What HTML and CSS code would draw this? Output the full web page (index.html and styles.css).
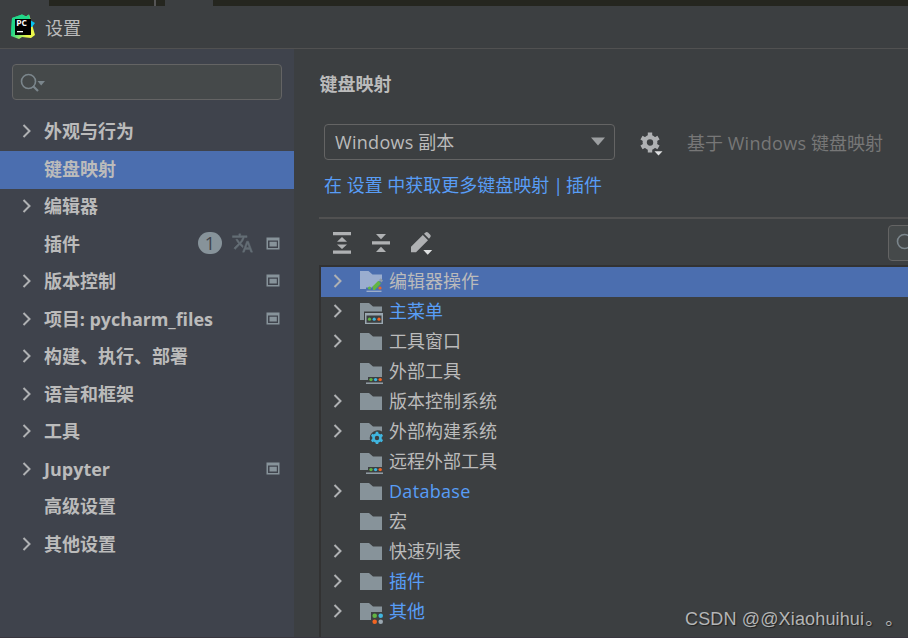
FILE: index.html
```
<!DOCTYPE html>
<html lang="zh-CN">
<head>
    <meta charset="UTF-8">
    <title>设置</title>
    <link rel="stylesheet" href="styles.css">
</head>
<body>
    <!-- Iconos compartidos -->
    <svg class="sprite" xmlns="http://www.w3.org/2000/svg">
        <symbol id="chevron" viewBox="0 0 10 14"><path d="M1.5 1 L7.5 7 L1.5 13" fill="none" stroke="currentColor" stroke-width="2"/></symbol>
        <symbol id="project" viewBox="0 0 14 13"><path fill="#87939a" fill-rule="evenodd" d="M0.5 0.5H13.5V12.5H0.5ZM2 3.5V11H12V3.5ZM3.5 4.7H10.8V9.6H3.5Z"/></symbol>
        <symbol id="search" viewBox="0 0 26 20"><circle cx="8.5" cy="8.5" r="7" fill="none" stroke="#7b868c" stroke-width="1.6"/><path d="M13 13L18 18" stroke="#7b868c" stroke-width="2.2"/><path d="M17.5 8H25L21.2 12.4Z" fill="#7b868c"/></symbol>
        <symbol id="folder" viewBox="0 0 24 24"><path d="M0 3H9L13 6.5H22V20H0Z" fill="#87939a"/></symbol>
        <symbol id="folder-edit" viewBox="0 0 24 24">
            <path d="M0 1H8.5L12.5 4.5H22V9L12 17.5H6V19H0Z" fill="#9aadcf"/>
            <path d="M12.8 20V16.2L18.3 10.7L21 13.4L14.8 20Z" fill="#62b543"/>
            <path d="M19 10L20.8 8.2L23 10.4L21.5 12.5Z" fill="#8f9ba5"/>
            <circle cx="9.5" cy="18" r="1.6" fill="#62b543"/><circle cx="20" cy="18" r="1.6" fill="#f26522"/>
            <path d="M6.5 21.3H21.5" stroke="#a3b2cc" stroke-width="1.3"/>
        </symbol>
        <symbol id="folder-menu" viewBox="0 0 24 24">
            <path d="M0 3H9L13 6.5H22V11.5H4V20H0Z" fill="#87939a"/>
            <path d="M5 13H23V24H5ZM6.5 15.5V22.7H21.5V15.5Z" fill="#9aa7b0" fill-rule="evenodd"/>
            <circle cx="9.5" cy="19.2" r="1.6" fill="#62b543"/><circle cx="14.2" cy="19.2" r="1.6" fill="#40b6e0"/><circle cx="19" cy="19.2" r="1.6" fill="#f26522"/>
        </symbol>
        <symbol id="folder-tool" viewBox="0 0 24 24">
            <path d="M0 3H9L13 6.5H22V17H8V20H0Z" fill="#87939a"/>
            <circle cx="11" cy="19.6" r="1.7" fill="#62b543"/><circle cx="15.6" cy="19.6" r="1.7" fill="#40b6e0"/><circle cx="20.2" cy="19.6" r="1.7" fill="#f26522"/>
            <path d="M6 23.2H23" stroke="#9aa7b0" stroke-width="1.4"/>
        </symbol>
        <symbol id="folder-gear" viewBox="0 0 24 24">
            <path d="M0 3H9L13 6.5H22V11.5A8 8 0 0 0 10 20H0Z" fill="#87939a"/>
            <circle cx="17" cy="18" r="3.5" fill="none" stroke="#40b6e0" stroke-width="2.6"/>
            <path d="M17 11.8V14M17 22V24.2M11.6 14.9L13.5 16M20.5 20L22.4 21.1M11.6 21.1L13.5 20M20.5 16L22.4 14.9" stroke="#40b6e0" stroke-width="2.6"/>
        </symbol>
        <symbol id="folder-other" viewBox="0 0 24 24">
            <path d="M0 3H9L13 6.5H22V12H11V20H0Z" fill="#87939a"/>
            <circle cx="14.7" cy="15.8" r="2.3" fill="#62b543"/><circle cx="20.7" cy="15.8" r="2.3" fill="#40b6e0"/>
            <circle cx="14.7" cy="21.7" r="2.3" fill="#f26522"/><circle cx="20.7" cy="21.7" r="2.3" fill="#9aa7b0"/>
        </symbol>
    </svg>

    <div class="window">
        <div class="backdrop"><span class="tab first"></span><span class="mark"></span><span class="tab second"></span></div>
        <div class="titlebar">
            <svg class="logo" width="26" height="26" viewBox="0 0 26 26">
                <defs><linearGradient id="pc" x1="0" y1="0.3" x2="1" y2="0.7"><stop offset="0.2" stop-color="#21d789"/><stop offset="0.75" stop-color="#e9f64a"/></linearGradient></defs>
                <path d="M2 4L12 0.5L16 2.5L19 0.5L20.5 5L25 21L21 24L12 23L9 25L1 22Z" fill="url(#pc)"/>
                <path d="M20 6L25 9L22 13L20 13Z" fill="#07c3f2"/>
                <path d="M2 4L12 0.5L16 2.5L19 0.5L20 5H5L4 14L1 20Z" fill="#21d789"/>
                <rect x="5" y="5" width="16" height="16" fill="#000"/>
                <text class="logo-text" x="6.2" y="12.4">PC</text>
                <rect x="7" y="17" width="6" height="1.3" fill="#fff"/>
            </svg>
            <span>设置</span>
        </div>

        <div class="content">
            <div class="sidebar">
                <div class="search"><svg width="26" height="20"><use href="#search"/></svg></div>
                <ul class="menu">
                    <li><svg class="arrow"><use href="#chevron"/></svg>外观与行为</li>
                    <li class="selected"><span class="arrow"></span>键盘映射</li>
                    <li><svg class="arrow"><use href="#chevron"/></svg>编辑器</li>
                    <li>
                        <span class="arrow"></span>插件
                        <span class="marks">
                            <span class="badge">1</span>
                            <svg width="23" height="22" viewBox="0 0 24 24"><path fill="#646d75" stroke="#646d75" stroke-width="0.5" d="M12.87 15.07l-2.54-2.51.03-.03c1.74-1.94 2.98-4.17 3.71-6.53H17V4h-7V2H8v2H1v2h11.17C11.5 7.92 10.44 9.75 9 11.35 8.07 10.32 7.3 9.19 6.69 8h-2c.73 1.63 1.73 3.17 2.98 4.56l-5.09 5.02L4 19l5-5 3.11 3.11.76-2.04zM18.5 10h-2L12 22h2l1.12-3h4.75L21 22h2l-4.5-12zm-2.62 7l1.62-4.33L19.12 17h-3.24z"/></svg>
                            <svg class="project"><use href="#project"/></svg>
                        </span>
                    </li>
                    <li><svg class="arrow"><use href="#chevron"/></svg>版本控制<span class="marks"><svg class="project"><use href="#project"/></svg></span></li>
                    <li><svg class="arrow"><use href="#chevron"/></svg><span class="name">项目: pycharm_files</span><span class="marks"><svg class="project"><use href="#project"/></svg></span></li>
                    <li><svg class="arrow"><use href="#chevron"/></svg>构建、执行、部署</li>
                    <li><svg class="arrow"><use href="#chevron"/></svg>语言和框架</li>
                    <li><svg class="arrow"><use href="#chevron"/></svg>工具</li>
                    <li><svg class="arrow"><use href="#chevron"/></svg>Jupyter<span class="marks"><svg class="project"><use href="#project"/></svg></span></li>
                    <li><span class="arrow"></span>高级设置</li>
                    <li><svg class="arrow"><use href="#chevron"/></svg>其他设置</li>
                </ul>
            </div>

            <div class="main">
                <h1>键盘映射</h1>
                <div class="keymap">
                    <div class="select"><span><span class="latin">Windows</span> 副本</span><svg width="14" height="9" viewBox="0 0 14 9"><path d="M0 0.5H14L7 8.5Z" fill="#9c9fa1"/></svg></div>
                    <svg class="gear" width="24" height="24" viewBox="0 0 24 24">
                        <circle cx="10" cy="10.5" r="5.3" fill="none" stroke="#afb1b3" stroke-width="4.2"/>
                        <path d="M10 0.6V4M10 17V20.4M1.5 5.6L4.5 7.3M15.5 13.7L18.5 15.4M1.5 15.4L4.5 13.7M15.5 7.3L18.5 5.6" stroke="#afb1b3" stroke-width="4.4"/>
                        <path d="M13 18H24L18.5 24.5Z" fill="#3c3f41"/>
                        <path d="M14.5 19.2H22.5L18.5 23.4Z" fill="#dfe1e2"/>
                    </svg>
                    <span class="based">基于 <span class="latin">Windows</span> 键盘映射</span>
                </div>
                <div class="links">在 设置 中获取更多键盘映射<span class="divider"> | </span>插件</div>
                <div class="toolbar">
                    <svg width="18" height="22" viewBox="0 0 18 22"><path fill="#afb1b3" d="M0 0H18V3.3H0ZM0 18.5H18V21.8H0ZM9 5L14 9.8H4ZM4 12.5H14L9 17Z"/></svg>
                    <svg width="18" height="22" viewBox="0 0 18 22"><path fill="#afb1b3" d="M0 9.3H18V12.6H0ZM4 2H14L9 7.2ZM9 14.8L14 20H4Z"/></svg>
                    <svg width="22" height="23" viewBox="0 0 22 23"><path fill="#afb1b3" d="M0 20.3V14.8L11.8 3L17 8.2L5 20.3ZM13 1.8L14.5 0.4Q15.8 -0.4 17 0.6L19.2 2.8Q20.2 4 19.2 5.3L18 6.8Z"/><path fill="#dfe1e2" d="M12.3 18H21.2L16.7 22.7Z"/></svg>
                    <div class="find"><svg width="26" height="20"><use href="#search"/></svg></div>
                </div>
                <ul class="tree">
                    <li class="selected"><svg class="arrow"><use href="#chevron"/></svg><svg class="folder"><use href="#folder-edit"/></svg>编辑器操作</li>
                    <li class="changed"><svg class="arrow"><use href="#chevron"/></svg><svg class="folder"><use href="#folder-menu"/></svg>主菜单</li>
                    <li><svg class="arrow"><use href="#chevron"/></svg><svg class="folder"><use href="#folder"/></svg>工具窗口</li>
                    <li><span class="arrow"></span><svg class="folder"><use href="#folder-tool"/></svg>外部工具</li>
                    <li><svg class="arrow"><use href="#chevron"/></svg><svg class="folder"><use href="#folder"/></svg>版本控制系统</li>
                    <li><svg class="arrow"><use href="#chevron"/></svg><svg class="folder"><use href="#folder-gear"/></svg>外部构建系统</li>
                    <li><span class="arrow"></span><svg class="folder"><use href="#folder-tool"/></svg>远程外部工具</li>
                    <li class="changed"><svg class="arrow"><use href="#chevron"/></svg><svg class="folder"><use href="#folder"/></svg><span class="latin">Database</span></li>
                    <li><span class="arrow"></span><svg class="folder"><use href="#folder"/></svg>宏</li>
                    <li><svg class="arrow"><use href="#chevron"/></svg><svg class="folder"><use href="#folder"/></svg>快速列表</li>
                    <li class="changed"><svg class="arrow"><use href="#chevron"/></svg><svg class="folder"><use href="#folder"/></svg>插件</li>
                    <li class="changed"><svg class="arrow"><use href="#chevron"/></svg><svg class="folder"><use href="#folder-other"/></svg>其他</li>
                </ul>
            </div>
        </div>
        <div class="watermark">CSDN @@Xiaohuihui<span class="stops">。。</span></div>
    </div>
</body>
</html>
```
FILE: styles.css
```
* {
    box-sizing: border-box;
}

body {
    margin: 0;
    background-color: #3c3f41;
    color: #bbbbbb;
    font-family: "Open Sans", "Noto Sans CJK SC", sans-serif;
    font-size: 18px;
    line-height: 24px;
    overflow: hidden;
}

ul {
    list-style: none;
    margin: 0;
    padding: 0;
}

svg {
    display: block;
    flex-shrink: 0;
}

.sprite {
    display: none;
}

.window {
    position: relative;
    display: flex;
    flex-direction: column;
    width: 908px;
    height: 638px;
    border-bottom: 1px solid #39363f;
    overflow: hidden;
}

.backdrop {
    display: flex;
    flex-shrink: 0;
    height: 6px;
    background-color: #25261f;
}

.tab {
    width: 48px;
    background-color: #3c3f41;
}

.tab.first {
    width: 49px;
}

.mark {
    width: 2px;
    margin: 0 9px 0 105px;
    background-color: #555555;
}

.titlebar {
    display: flex;
    flex-shrink: 0;
    align-items: center;
    gap: 9px;
    height: 43px;
    padding-left: 10px;
    border-bottom: 1px solid #515151;
}

.titlebar span {
    padding-top: 2px;
}

.logo-text {
    font: bold 8.5px "Open Sans", sans-serif;
    fill: #ffffff;
}

.content {
    display: flex;
    flex: 1;
    min-height: 0;
}

.sidebar {
    width: 294px;
    flex-shrink: 0;
    padding-top: 15px;
    background-color: #3f434c;
}

.search {
    display: flex;
    align-items: center;
    height: 36px;
    margin: 0 12px 13.5px;
    padding: 1px 0 0 7px;
    border: 1px solid #646464;
    border-radius: 4px;
    background-color: #45494a;
}

.menu li {
    display: flex;
    align-items: center;
    height: 37.5px;
    padding: 0 14px 2px 22px;
    font-weight: bold;
}

.menu .selected,
.tree .selected {
    background-color: #4b6eaf;
}

.arrow {
    width: 10px;
    height: 14px;
    flex-shrink: 0;
    color: #afb1b3;
}

.menu .arrow {
    margin-right: 12px;
}

.name {
    letter-spacing: -0.08px;
}

.marks {
    display: flex;
    align-items: center;
    gap: 12px;
    margin-left: auto;
    margin-top: -1px;
}

.project {
    width: 14px;
    height: 13px;
}

.badge {
    width: 24px;
    height: 22px;
    margin-right: -3px;
    border-radius: 11px;
    background-color: #87939a;
    color: #3f434c;
    font-weight: normal;
    line-height: 23px;
    text-align: center;
}

.main {
    flex: 1;
    min-width: 0;
    padding: 23px 0 0 25px;
}

h1 {
    margin: 0;
    padding-left: 0.5px;
    font-size: 18px;
    line-height: 24px;
}

.latin {
    letter-spacing: 0.3px;
}

.keymap {
    display: flex;
    align-items: center;
    margin-top: 28px;
    padding-left: 5px;
    white-space: nowrap;
}

.select {
    display: flex;
    align-items: center;
    justify-content: space-between;
    width: 291px;
    height: 36px;
    padding: 0 9px 1px 10px;
    border: 1px solid #646464;
    border-radius: 4px;
}

.gear {
    margin: 3px 23px 0 25px;
}

.based {
    padding-top: 1px;
    color: #777777;
}

.links {
    margin-top: 13px;
    padding-left: 5px;
    color: #589df6;
    white-space: nowrap;
}

.divider {
    letter-spacing: -0.9px;
}

.toolbar {
    display: flex;
    align-items: center;
    gap: 21px;
    height: 48px;
    margin-top: 20px;
    padding: 2px 0 0 14px;
    border-top: 2px solid #515151;
}

.find {
    display: flex;
    align-items: center;
    width: 60px;
    height: 36px;
    flex-shrink: 0;
    margin-left: auto;
    margin-right: -40px;
    padding-left: 7px;
    border: 1px solid #646464;
    border-radius: 4px;
    background-color: #45494a;
}

.tree {
    height: 380px;
    border-top: 2px solid #323232;
    border-left: 2px solid #323232;
}

.tree li {
    display: flex;
    align-items: center;
    height: 30px;
    padding: 0 0 2px 12px;
}

.tree .changed {
    color: #589df6;
}

.folder {
    width: 24px;
    height: 24px;
    margin: 2px 5px 0 17px;
}

.watermark {
    position: absolute;
    left: 685px;
    bottom: 6px;
    color: #b4b5b6;
    font-family: "Liberation Sans", "Noto Sans CJK SC", sans-serif;
    letter-spacing: 0.15px;
    white-space: nowrap;
    text-shadow: 1px 1px 1px #222222;
    text-spacing-trim: space-all;
}

.stops {
    margin-left: 1px;
    letter-spacing: 2px;
}
```
